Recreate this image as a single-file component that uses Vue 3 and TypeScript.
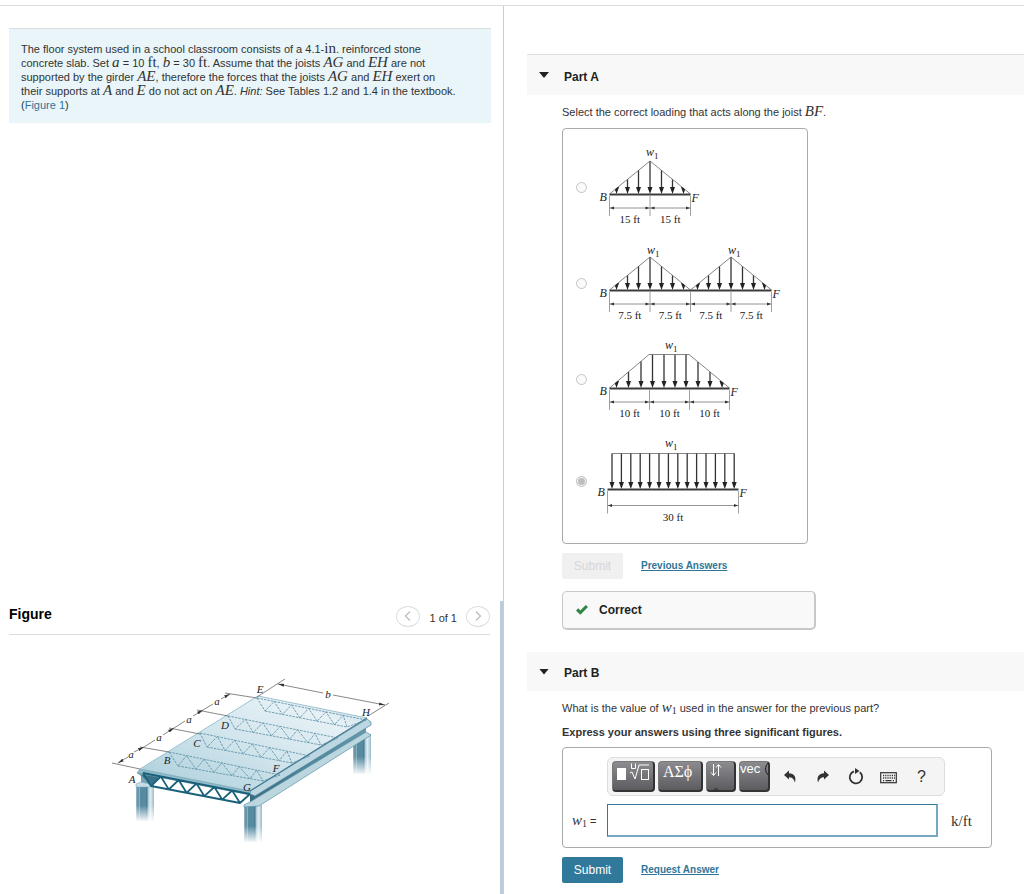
<script setup lang="ts">
import { ref } from 'vue'

interface Arrow { x: number; top: number }
interface Label { x: number; y: number; text: string }
interface Loading {
  id: string
  height: number
  outline: string
  beamY: number
  x1: number
  x2: number
  arrows: Arrow[]
  stops: number[]
  span: string
  peaks: { x: number; y: number }[]
}

const slope = (xs: number[], beam: number, top: number, foot: number, crest: number): Arrow[] =>
  xs.map((x) => ({ x, top: beam - ((beam - top) * (x - foot)) / (crest - foot) }))

const loadings: Loading[] = [
  {
    id: 'triangle', height: 80, outline: '12.5,47 53,14 93.5,47', beamY: 47, x1: 12.5, x2: 93.5,
    arrows: [...slope([19.5, 30.5, 41.5, 53], 47, 14, 12.5, 53), ...slope([64.5, 75.5, 86.5], 47, 14, 93.5, 53)],
    stops: [12.5, 53, 93.5], span: '15 ft', peaks: [{ x: 49, y: 9 }],
  },
  {
    id: 'double-triangle', height: 80, outline: '12.5,47 53,14 93.5,47 134,14 174.5,47', beamY: 47, x1: 12.5, x2: 174.5,
    arrows: [
      ...slope([19.5, 30.5, 41.5, 53], 47, 14, 12.5, 53), ...slope([64.5, 75.5, 86.5], 47, 14, 93.5, 53),
      ...slope([100.5, 111.5, 122.5, 134], 47, 14, 93.5, 134), ...slope([145.5, 156.5, 167.5], 47, 14, 174.5, 134),
    ],
    stops: [12.5, 53, 93.5, 134, 174.5], span: '7.5 ft', peaks: [{ x: 50, y: 11 }, { x: 131, y: 11 }],
  },
  {
    id: 'trapezoid', height: 80, outline: '12.5,49 52,15.5 92,15.5 132.5,49', beamY: 49, x1: 12.5, x2: 132.5,
    arrows: [
      ...slope([19.5, 31.5, 44], 49, 15.5, 12.5, 52),
      ...[55.5, 67, 78, 89].map((x) => ({ x, top: 15.5 })),
      ...slope([101, 113, 125], 49, 15.5, 132.5, 92),
    ],
    stops: [12.5, 52.5, 92.5, 132.5], span: '10 ft', peaks: [{ x: 68, y: 10 }],
  },
  {
    id: 'uniform', height: 92, outline: '15,18.5 137.5,18.5', beamY: 54, x1: 10.5, x2: 141.5,
    arrows: Array.from({ length: 14 }, (_, i) => ({ x: 15 + i * 9.4, top: 18.5 })),
    stops: [10.5, 141.5], span: '30 ft', peaks: [{ x: 68, y: 12 }],
  },
]

const selected = ref('uniform')
const answer = ref('')

const spans = (l: Loading) => l.stops.slice(1).map((end, i) => ({ start: l.stops[i], end }))
const dimY = (l: Loading) => l.beamY + (l.id === 'uniform' ? 16.5 : 14)

type Point = [number, number]
const truss = (t1: Point, t2: Point, b1: Point, b2: Point, topStep = 1 / 6, bottomStep = 0.2): string => {
  const at = (p: Point, q: Point, k: number) => `${p[0] + (q[0] - p[0]) * k},${p[1] + (q[1] - p[1]) * k}`
  let d = `M${t1} L${t2} M${b1} L${b2} M${t1}`
  for (let i = 0; i < 6; i++) {
    d += ` L${at(b1, b2, Math.min(1, bottomStep * i))} L${at(t1, t2, i === 5 ? 1 : topStep * (i + 1))}`
  }
  return d
}

const frontTruss = truss([143, 773], [250, 794], [151, 786], [240, 803])
const joists = [
  truss([169, 752], [280, 775], [178, 766], [263, 781], 0.158, 0.212),
  truss([200, 733], [310, 756], [207, 747], [292, 763], 0.158, 0.212),
  truss([228, 716], [338, 738], [235, 729], [321, 745], 0.158, 0.212),
  truss([257, 698], [366, 720], [265, 711], [347, 727], 0.158, 0.212),
]
const columns = [{ x: 136, y: 785, h: 36 }, { x: 244, y: 805, h: 37 }, { x: 353, y: 734, h: 40 }]
const figureLabels: Label[] = [
  { x: 132, y: 783, text: 'A' }, { x: 167, y: 764, text: 'B' }, { x: 197, y: 747, text: 'C' },
  { x: 225, y: 729, text: 'D' }, { x: 260, y: 693, text: 'E' }, { x: 276, y: 772, text: 'F' },
  { x: 247, y: 791, text: 'G' }, { x: 366, y: 716, text: 'H' },
  { x: 131, y: 758, text: 'a' }, { x: 159, y: 741, text: 'a' }, { x: 189, y: 723, text: 'a' },
  { x: 217, y: 705, text: 'a' }, { x: 328, y: 698, text: 'b' },
]
</script>

<template>
  <main class="page">
    <div class="left">
      <section class="problem">
        <p>
          The floor system used in a school classroom consists of a 4.1-<span class="math">in</span>. reinforced stone<br>
          concrete slab. Set <i class="math">a</i> = 10 <span class="math">ft</span>, <i class="math">b</i> = 30 <span class="math">ft</span>. Assume that the joists <i class="math">AG</i> and <i class="math">EH</i> are not<br>
          supported by the girder <i class="math">AE</i>, therefore the forces that the joists <i class="math">AG</i> and <i class="math">EH</i> exert on<br>
          their supports at <i class="math">A</i> and <i class="math">E</i> do not act on <i class="math">AE</i>. <em>Hint:</em> See Tables 1.2 and 1.4 in the textbook.<br>
          (<a href="#figure">Figure 1</a>)
        </p>
      </section>

      <section id="figure" class="figure">
        <header class="figure-head">
          <h2>Figure</h2>
          <nav class="pager" aria-label="Figures">
            <button type="button" aria-label="Previous figure"><svg width="10" height="12" viewBox="0 0 10 12"><path d="M7 1.5 2.5 6 7 10.500" /></svg></button>
            <span>1 of 1</span>
            <button type="button" aria-label="Next figure"><svg width="10" height="12" viewBox="0 0 10 12"><path d="M3 1.500 7.500 6 3 10.500" /></svg></button>
          </nav>
        </header>
        <svg class="structure" width="300" height="180" viewBox="100 670 300 180" role="img" aria-label="Floor slab on joists and girders">
          <defs>
            <linearGradient id="slab" x1="0" y1="1" x2="1" y2="0">
              <stop offset="0" stop-color="#a9cdda" /><stop offset="0.5" stop-color="#d3e6ed" /><stop offset="0.8" stop-color="#e6f1f5" /><stop offset="1" stop-color="#b9d6e2" />
            </linearGradient>
            <linearGradient id="fade" x1="0" y1="0" x2="0" y2="1">
              <stop offset="0.55" stop-color="#fff" stop-opacity="0" /><stop offset="1" stop-color="#fff" />
            </linearGradient>
            <linearGradient id="flange" x1="0" y1="0" x2="1" y2="0">
              <stop offset="0" stop-color="#8fb6c6" /><stop offset="0.5" stop-color="#deecf2" /><stop offset="1" stop-color="#98bccb" />
            </linearGradient>
            <linearGradient id="web" x1="0" y1="1" x2="1" y2="0">
              <stop offset="0" stop-color="#36697f" /><stop offset="0.5" stop-color="#4f879c" /><stop offset="1" stop-color="#6799ac" />
            </linearGradient>
            <marker id="tip" viewBox="0 0 6 4" markerWidth="6" markerHeight="4" refX="6" refY="2" orient="auto-start-reverse" markerUnits="userSpaceOnUse">
              <path d="M0 .5 6 2 0 3.500Z" fill="#333" />
            </marker>
          </defs>
          <g v-for="c in columns" :key="c.x">
            <rect :x="c.x" :y="c.y" width="4" :height="c.h" fill="#8bb1c1" />
            <rect :x="c.x + 4" :y="c.y" width="7" :height="c.h" fill="#568ba1" />
            <rect :x="c.x + 11" :y="c.y" width="7" :height="c.h" fill="url(#flange)" />
            <path :d="`M${c.x + 2} ${c.y}v${c.h}M${c.x + 11} ${c.y}v${c.h}`" stroke="#376d83" stroke-width=".8" />
            <rect :x="c.x - 1" :y="c.y" width="20" :height="c.h + 1" fill="url(#fade)" />
          </g>
          <path d="M137 773 143 770 160 776 152 786 141 783 141 776Z" fill="#75a4b5" />
          <path d="M141 775 160 776 151 785Z" fill="#3b7186" />
          <path d="M136 784 141 782 154 785 151 787 136 787Z" fill="#c7dee7" stroke="#7ba7b8" stroke-width=".6" />
          <path d="M250 795 366 724V734L250 805Z" fill="url(#web)" />
          <path d="M244 805 250 802 366 732 371 735 259 806 244 807Z" fill="#bcd6e0" stroke="#5f91a5" stroke-width=".7" />
          <path d="M250 791 367 719 371 722V725L255 796 250 794Z" fill="#bcd7e1" stroke="#4e8499" stroke-width=".7" />
          <path d="M140 769 258 696 367 718 250 791Z" fill="url(#slab)" />
          <path d="M140 769 250 791V795L137 773Z" fill="#8fbac9" stroke="#6697aa" stroke-width=".6" />
          <path d="M140 769 258 696 367 718" fill="none" stroke="#9cc2d0" stroke-width="1" />
          <path d="M367 718 250 791" fill="none" stroke="#44798e" stroke-width="1.200" />
          <path v-for="d in joists" :key="d" :d="d" fill="none" stroke="#578da4" stroke-width=".8" stroke-dasharray="2.500 1" />
          <path :d="frontTruss" fill="none" stroke="#19617a" stroke-width="1.800" stroke-linejoin="round" />
          <g fill="none" stroke="#555" stroke-width=".7">
            <path d="M112 763 140 769M140 747 169 752M169 728 200 734M197 710 228 716M225 693 257 698M257 697 285 679M368 716 389 703" />
            <path d="M144 747 155 740M174 728 185 721M203 710 213 704" />
            <path d="M128 757 118 763" marker-end="url(#tip)" />
            <path d="M134 752 144 747" marker-end="url(#tip)" />
            <path d="M163 735 174 728" marker-end="url(#tip)" />
            <path d="M193 716 203 710" marker-end="url(#tip)" />
            <path d="M221 699 230 694" marker-end="url(#tip)" />
            <path d="M323 693 278 684" marker-end="url(#tip)" />
            <path d="M333 695 385 705" marker-end="url(#tip)" />
          </g>
          <text v-for="(l, i) in figureLabels" :key="i" :x="l.x" :y="l.y" text-anchor="middle" class="figure-label">{{ l.text }}</text>
        </svg>
      </section>
    </div>

    <div class="right">
      <section>
        <header class="part-head first"><button type="button" class="caret" aria-label="Collapse Part A"></button><h2>Part A</h2></header>
        <div class="part-body">
          <p class="question">Select the correct loading that acts along the joist <i class="math">BF</i>.</p>
          <fieldset class="options" aria-label="Loading">
            <label v-for="l in loadings" :key="l.id" class="option">
              <input v-model="selected" type="radio" name="loading" :value="l.id" :aria-label="l.id" disabled>
              <svg width="190" :height="l.height" :viewBox="`0 0 190 ${l.height}`">
                <clipPath v-if="l.id !== 'uniform'" :id="`clip-${l.id}`"><polygon :points="l.outline" /></clipPath>
                <polyline :points="l.outline" fill="none" stroke="#666" stroke-width=".8" />
                <g :clip-path="l.id !== 'uniform' ? `url(#clip-${l.id})` : undefined">
                  <g v-for="a in l.arrows" :key="a.x">
                    <path :d="`M${a.x} ${a.top}V${l.beamY - 4}`" stroke="#333" stroke-width="1.300" />
                    <path :d="`M${a.x - 2.5} ${l.beamY - 7}h5L${a.x} ${l.beamY}Z`" fill="#222" />
                  </g>
                </g>
                <path :d="`M${l.x1} ${l.beamY + 0.5}H${l.x2}`" stroke="#3c3c3c" stroke-width="1.800" />
                <path v-for="x in l.stops" :key="x" :d="`M${x} ${l.beamY + 2}V${dimY(l) + 8}`" stroke="#888" stroke-width=".8" />
                <g v-for="s in spans(l)" :key="s.start">
                  <path :d="`M${s.start} ${dimY(l)}H${s.end}`" stroke="#777" stroke-width=".8" />
                  <path :d="`M${s.start + 0.5} ${dimY(l)}l4-1.500v3ZM${s.end - 0.5} ${dimY(l)}l-4-1.500v3Z`" fill="#333" />
                  <text :x="(s.start + s.end) / 2" :y="dimY(l) + 15" text-anchor="middle" class="span">{{ l.span }}</text>
                </g>
                <text :x="l.x1 - 10" :y="l.beamY + 7" class="node">B</text>
                <text :x="l.x2 + 1" :y="l.beamY + 8" class="node">F</text>
                <text v-for="p in l.peaks" :key="p.x" :x="p.x" :y="p.y" class="node">w<tspan class="sub" dy="3">1</tspan></text>
              </svg>
            </label>
          </fieldset>
          <div class="actions">
            <button type="button" class="submit" disabled>Submit</button>
            <a href="#previous">Previous Answers</a>
          </div>
          <div class="result" role="status">
            <svg width="14" height="12" viewBox="0 0 14 12"><path d="M1 6.500 3.200 4.300 5.300 6.400 10.800 1 13 3.100 5.300 10.700Z" fill="#2c8540" /></svg>
            <strong>Correct</strong>
          </div>
        </div>
      </section>

      <section class="part-b">
        <header class="part-head"><button type="button" class="caret" aria-label="Collapse Part B"></button><h2>Part B</h2></header>
        <div class="part-body">
          <p class="question">What is the value of <span class="math"><i>w</i><sub>1</sub></span> used in the answer for the previous part?</p>
          <p class="instruction">Express your answers using three significant figures.</p>
          <div class="answer">
            <div class="toolbar" role="toolbar" aria-label="Math tools">
              <button type="button" class="key templates" aria-label="Templates">
                <svg width="43" height="31" viewBox="0 0 43 31"><rect x="4" y="6" width="9" height="12" fill="#fff" /><g fill="none" stroke="#fff"><path d="M18.500 1.500v5h4v-5M17 11l2-1 3 7 4-14h10" /><rect x="28.500" y="7.500" width="7" height="10" /></g></svg>
              </button>
              <button type="button" class="key greek">ΑΣϕ</button>
              <button type="button" class="key arrows" aria-label="Subscripts and arrows">
                <svg width="30" height="31" viewBox="0 0 30 31"><path d="M6.500 2v11M4 10.500l2.500 3 2.500-3M11.500 14V3M9 5.500l2.500-3 2.500 3" fill="none" stroke="#fff" /><path d="M7 29c0-3 4-3 4 0" fill="none" stroke="#222" /></svg>
              </button>
              <button type="button" class="key vec">vec<svg width="5" height="14" viewBox="0 0 5 14"><path d="M4 1Q-1 7 4 13" fill="none" stroke="#222" /></svg></button>
              <button type="button" class="tool" aria-label="Undo"><svg width="14" height="14" viewBox="0 0 14 14"><path d="M1 5 6 .5V3.300C11 3.300 13.500 7 12 12.500 11 9 9 7.200 6 7.200V9.500Z" fill="#333" /></svg></button>
              <button type="button" class="tool" aria-label="Redo"><svg width="14" height="14" viewBox="0 0 14 14"><path d="M13 5 8 .5V3.300C3 3.300.5 7 2 12.500 3 9 5 7.200 8 7.200V9.500Z" fill="#333" /></svg></button>
              <button type="button" class="tool" aria-label="Reset"><svg width="16" height="18" viewBox="0 0 16 18"><path d="M11.800 4.300A6.200 6.200 0 1 1 6 3.300" fill="none" stroke="#333" stroke-width="1.800" /><path d="M7 0 11.500 3 7 6Z" fill="#333" /></svg></button>
              <button type="button" class="tool" aria-label="Keyboard"><svg width="17" height="14" viewBox="0 0 17 14"><rect x=".7" y="2.700" width="15.600" height="10" fill="none" stroke="#333" stroke-width="1.200" /><path d="M3 5.500h12M3 8h12" stroke="#333" stroke-width="1.500" stroke-dasharray="1.200 1" /><path d="M3 10.700h1.200M5.500 10.700h6M12.800 10.700h1.200" stroke="#333" stroke-width="1.300" /></svg></button>
              <button type="button" class="tool help" aria-label="Help">?</button>
            </div>
            <div class="entry">
              <label for="w1"><span class="math"><i>w</i><sub>1</sub></span> =</label>
              <input id="w1" v-model="answer" type="text">
              <span class="unit">k/ft</span>
            </div>
          </div>
          <div class="actions">
            <button type="button" class="submit">Submit</button>
            <a href="#request">Request Answer</a>
          </div>
        </div>
      </section>
    </div>
  </main>
</template>

<style>
html, body { background: #fff; }
</style>

<style scoped>
* { box-sizing: border-box; }
.page {
  display: grid;
  grid-template-columns: minmax(0, 503fr) minmax(0, 521fr);
  min-height: calc(100vh - 5px);
  margin-top: 5px;
  border-top: 1px solid #dedede;
  font-family: "Liberation Sans", Arial, sans-serif;
  font-size: 11px;
  line-height: 14px;
  color: #333;
}
p, h2, fieldset { margin: 0; }
a { color: #2f7699; }
button { font-family: inherit; cursor: pointer; }
.math { font-family: "Liberation Serif", serif; font-size: 15px; line-height: 0; }
.math sub { font-size: 10px; line-height: 0; vertical-align: -2px; }
.left { display: flex; flex-direction: column; justify-content: space-between; }
.problem {
  margin: 22px 12px 0 9px;
  padding: 13px 0 11px 12px;
  background: #e9f5f8;
  border-top: 1px solid #d9dfdf;
}
.problem a { text-decoration: none; }
.figure { height: 293px; padding: 0 10px 0 9px; border-right: 3px solid #bccbdc; }
.figure-head { display: flex; justify-content: space-between; height: 34px; padding-top: 3px; border-bottom: 1px solid #dcdcdc; }
.figure-head h2 { padding-top: 2px; font-size: 14px; line-height: 16px; color: #000; }
.pager { display: flex; align-items: center; gap: 9px; height: 24px; }
.pager span { padding-top: 3px; }
.pager button { display: grid; place-items: center; width: 24px; height: 21px; padding: 0; background: #fff; border: 1px solid #dedede; border-radius: 50%; }
.pager path { fill: none; stroke: #bbb; stroke-width: 1.200; }
.structure { display: block; margin: 35px auto 0 91px; }
.figure-label { font: italic 11px "Liberation Serif", serif; fill: #222; }
.right { padding: 48px 0 8px 23px; border-left: 1px solid #c3cddd; }
.part-head { display: flex; align-items: center; gap: 15px; height: 39px; padding-left: 12px; background: #f8f8f8; }
.part-head.first { height: 41px; border-top: 1px solid #dedede; }
.part-head h2 { padding-top: 3px; font-size: 12px; line-height: 14px; color: #222; }
.caret { width: 10px; height: 6px; padding: 0; border: 0; background: #222; clip-path: polygon(0 0, 100% 0, 50% 100%); }
.part-body { padding: 10px 32px 0 35px; }
.options {
  display: flex;
  flex-direction: column;
  gap: 16px;
  max-width: 246px;
  margin-top: 9px;
  padding: 18px 8px 16px 13px;
  border: 1px solid #aaa;
  border-radius: 4px;
}
.option { display: flex; align-items: center; gap: 10px; }
.option svg { display: block; flex: none; overflow: visible; }
.option input { appearance: none; flex: none; width: 11px; height: 11px; margin: 0; border: 1px solid #c4c4c4; border-radius: 50%; background: #fafafa; }
.option input:checked { background: #bdbdbd; box-shadow: inset 0 0 0 1px #fafafa; }
.span { font: 11px "Liberation Serif", serif; fill: #222; }
.node { font: italic 12px "Liberation Serif", serif; fill: #222; }
.sub { font-size: 9px; font-style: normal; }
.actions { display: flex; align-items: center; gap: 18px; margin-top: 9px; }
.actions a { font-weight: bold; font-size: 10px; }
.submit { width: 61px; height: 26px; padding: 0; border: 0; border-radius: 2px; font-size: 12px; color: #fff; background: #31799a; }
.submit:disabled { color: #d6d6d6; background: #f0f0f0; }
.result { display: flex; align-items: center; gap: 10px; max-width: 254px; height: 39px; margin-top: 12px; padding-left: 12px; background: #f9f9f9; border: 1px solid #c8c8c8; border-width: 1px 2px 2px 1px; border-radius: 5px; font-size: 12px; color: #222; }
.part-b { margin-top: 22px; }
.instruction { margin-top: 10px; font-weight: bold; }
.answer { margin-top: 8px; padding: 9px 0 10px; border: 1px solid #aaa; border-radius: 4px; }
.toolbar { display: flex; align-items: center; width: fit-content; height: 39px; margin-left: 44px; padding: 0 6px 0 4px; background: #f4f4f4; border: 1px solid #ddd; border-radius: 6px; }
.key { display: flex; flex: none; align-items: flex-start; height: 31px; margin-right: 3px; padding: 0; overflow: hidden; color: #fff; background: linear-gradient(#8b8b90, #5c5c60); border: 1px solid #555; border-width: 1px 2px 2px 1px; border-color: #777 #333 #333 #777; border-radius: 4px; }
.templates { width: 43px; }
.greek { width: 45px; padding: 1px 0 0 4px; font: 16px/17px "Liberation Serif", serif; }
.arrows { width: 30px; }
.vec { width: 31px; gap: 4px; font-size: 13px; line-height: 13px; }
.key svg { flex: none; }
.tool { display: grid; place-items: center; width: 33px; height: 31px; padding: 0; border: 0; background: none; color: #333; }
.help { font-size: 16px; }
.entry { display: flex; align-items: center; margin-top: 8px; }
.entry label { flex: 0 0 44px; padding-left: 9px; }
.entry input { flex: 1; min-width: 0; height: 33px; padding: 0 8px; border: 1px solid #31799a; border-width: 1px 2px 2px 1px; border-color: #31799a #75a8c1 #75a8c1 #31799a; outline: 0; font: inherit; }
.unit { flex: 0 0 53px; padding-left: 13px; font-family: "Liberation Serif", serif; font-size: 15px; }
</style>
